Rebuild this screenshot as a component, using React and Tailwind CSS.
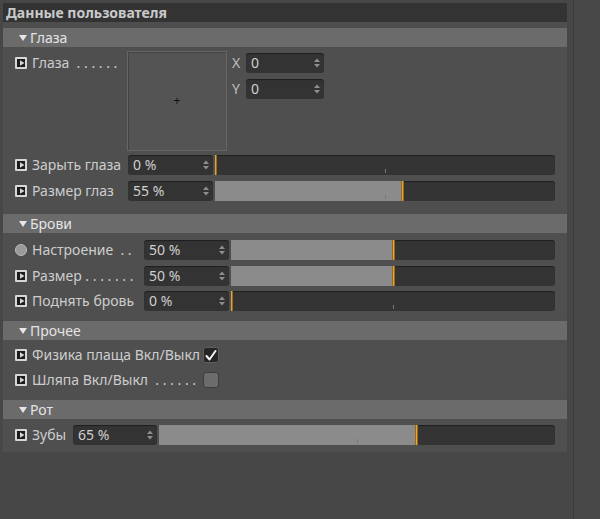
import React from "react";

const font = { fontFamily: '"Noto Sans", "Open Sans", sans-serif' };

function AnimIcon() {
  return (
    <svg width="12" height="12" viewBox="0 0 12 12" className="shrink-0">
      <rect x="0" y="0" width="12" height="12" rx="1" fill="#d6d6d6" />
      <rect x="2" y="2" width="8" height="8" fill="#1c1c1c" />
      <polygon points="5,3.2 9.5,6 5,8.8" fill="#d6d6d6" />
    </svg>
  );
}

function CircleIcon() {
  return <div className="w-[12px] h-[12px] rounded-full bg-[#9a9a9a] border border-[#bcbcbc] shrink-0" />;
}

function Arrows() {
  return (
    <svg width="6" height="10" viewBox="0 0 6 10" className="shrink-0">
      <polygon points="3,0.5 6,4 0,4" fill="#8e8e8e" />
      <polygon points="0,6 6,6 3,9.5" fill="#8e8e8e" />
    </svg>
  );
}

function Field({ value, w }) {
  return (
    <div
      className={`${w} h-[20px] bg-[#333333] rounded-[3px] flex items-center justify-between pl-[5px] pr-[4px] shadow-[inset_0_1px_1px_rgba(0,0,0,0.4)] shrink-0`}
    >
      <span className="text-[14px] text-[#d0d0d0] leading-none">{value}</span>
      <Arrows />
    </div>
  );
}

function Slider({ value }) {
  return (
    <div className="relative flex-1 h-[20px] ml-[2px] bg-[#343434] rounded-r-[3px] shadow-[inset_0_1px_1px_rgba(0,0,0,0.4)] overflow-hidden">
      <div className="absolute left-0 top-0 bottom-0 bg-[#8b8b8b]" style={{ width: `${value}%` }} />
      <div className="absolute bottom-[2px] h-[4px] w-px bg-[#777]" style={{ left: "50%" }} />
      <div
        className="absolute top-0 bottom-0 w-[3px] bg-[#e9a531] border-x border-[#9a6a1a]"
        style={{ left: `calc(${value}% - 1px)` }}
      />
    </div>
  );
}

function Label({ icon = "anim", text, w }) {
  return (
    <div className={`${w} shrink-0 flex items-center pl-[12px] gap-[5px]`}>
      {icon === "anim" ? <AnimIcon /> : <CircleIcon />}
      <span className="text-[14px] text-[#cdcdcd] whitespace-pre leading-none">{text}</span>
    </div>
  );
}

function SliderRow({ icon, label, lw, fw, value, mt }) {
  return (
    <div className={`flex items-center h-[20px] pr-[12px] ${mt}`}>
      <Label icon={icon} text={label} w={lw} />
      <Field value={`${value} %`} w={fw} />
      <Slider value={value} />
    </div>
  );
}

function Header({ title }) {
  return (
    <div className="h-[19px] bg-[#6b6b6b] flex items-center pl-[16px] gap-[3px]">
      <svg width="8" height="6" viewBox="0 0 8 6">
        <polygon points="0,0 8,0 4,6" fill="#e6e6e6" />
      </svg>
      <span className="text-[14px] text-[#e4e4e4] leading-none">{title}</span>
    </div>
  );
}

function Checkbox({ checked }) {
  return checked ? (
    <div className="w-[16px] h-[16px] rounded-[3px] bg-[#252525] border border-[#5e5e5e] flex items-center justify-center">
      <svg width="12" height="11" viewBox="0 0 12 11">
        <path d="M1.5 6 L4.5 9.5 L10.5 1" stroke="#f2f2f2" strokeWidth="2" fill="none" strokeLinecap="round" strokeLinejoin="round" />
      </svg>
    </div>
  ) : (
    <div className="w-[16px] h-[16px] rounded-[3px] bg-[#6c6c6c] border border-[#3e3e3e]" />
  );
}

export default function App() {
  return (
    <div className="w-[600px] h-[519px] bg-[#474747] flex" style={font}>
      <div className="w-[574px] border-r border-[#3b3b3b] pt-[3px] pl-[3px] pr-[6px] flex flex-col">
        <div className="h-[19px] bg-[#333333] flex items-center pl-[3px]">
          <span className="text-[14px] font-bold text-[#c9c9c9] leading-none">Данные пользователя</span>
        </div>
        <div className="bg-[#4e4e4e] pt-[6px] flex flex-col gap-[3px]">
          <div className="flex flex-col">
            <Header title="Глаза" />
            <div className="bg-[#4f4f4f] pt-[4px] pb-[10px] flex flex-col">
              <div className="flex items-start h-[100px]">
                <div className="w-[124px] shrink-0 flex items-center pl-[12px] gap-[5px] mt-[5px]">
                  <AnimIcon />
                  <span className="text-[14px] text-[#cdcdcd] whitespace-pre leading-none">Глаза  . . . . . .</span>
                </div>
                <div className="w-[100px] h-[100px] bg-[#545454] border border-[#666] shadow-[inset_1px_1px_0_#444] flex items-center justify-center shrink-0">
                  <span className="text-[12px] text-[#111] leading-none">+</span>
                </div>
                <div className="flex flex-col gap-[6px] ml-[5px] mt-[2px]">
                  <div className="flex items-center gap-[4px]">
                    <span className="text-[14px] text-[#bdbdbd] w-[10px] leading-none">X</span>
                    <Field value="0" w="w-[78px]" />
                  </div>
                  <div className="flex items-center gap-[4px]">
                    <span className="text-[14px] text-[#bdbdbd] w-[10px] leading-none">Y</span>
                    <Field value="0" w="w-[78px]" />
                  </div>
                </div>
              </div>
              <SliderRow label="Зарыть глаза" lw="w-[125px]" fw="w-[85px]" value={0} mt="mt-[4px]" />
              <SliderRow label="Размер глаз" lw="w-[125px]" fw="w-[85px]" value={55} mt="mt-[6px]" />
            </div>
          </div>

          <div className="flex flex-col">
            <Header title="Брови" />
            <div className="bg-[#4f4f4f] pt-[7px] pb-[7px] flex flex-col">
              <SliderRow icon="circle" label="Настроение  . ." lw="w-[141px]" fw="w-[85px]" value={50} mt="" />
              <SliderRow label="Размер . . . . . . ." lw="w-[141px]" fw="w-[85px]" value={50} mt="mt-[6px]" />
              <SliderRow label="Поднять бровь" lw="w-[141px]" fw="w-[85px]" value={0} mt="mt-[5px]" />
            </div>
          </div>

          <div className="flex flex-col">
            <Header title="Прочее" />
            <div className="bg-[#4f4f4f] pt-[5px] pb-[7px] flex flex-col gap-[5px]">
              <div className="flex items-center h-[20px]">
                <Label text="Физика плаща Вкл/Выкл" w="w-[200px]" />
                <Checkbox checked />
              </div>
              <div className="flex items-center h-[20px]">
                <Label text="Шляпа Вкл/Выкл  . . . . . ." w="w-[200px]" />
                <Checkbox />
              </div>
            </div>
          </div>

          <div className="flex flex-col">
            <Header title="Рот" />
            <div className="bg-[#4f4f4f] pt-[6px] pb-[7px] flex flex-col">
              <SliderRow label="Зубы" lw="w-[70px]" fw="w-[84px]" value={65} mt="" />
            </div>
          </div>
        </div>
      </div>
      <div className="flex-1 bg-[#484848]" />
    </div>
  );
}
